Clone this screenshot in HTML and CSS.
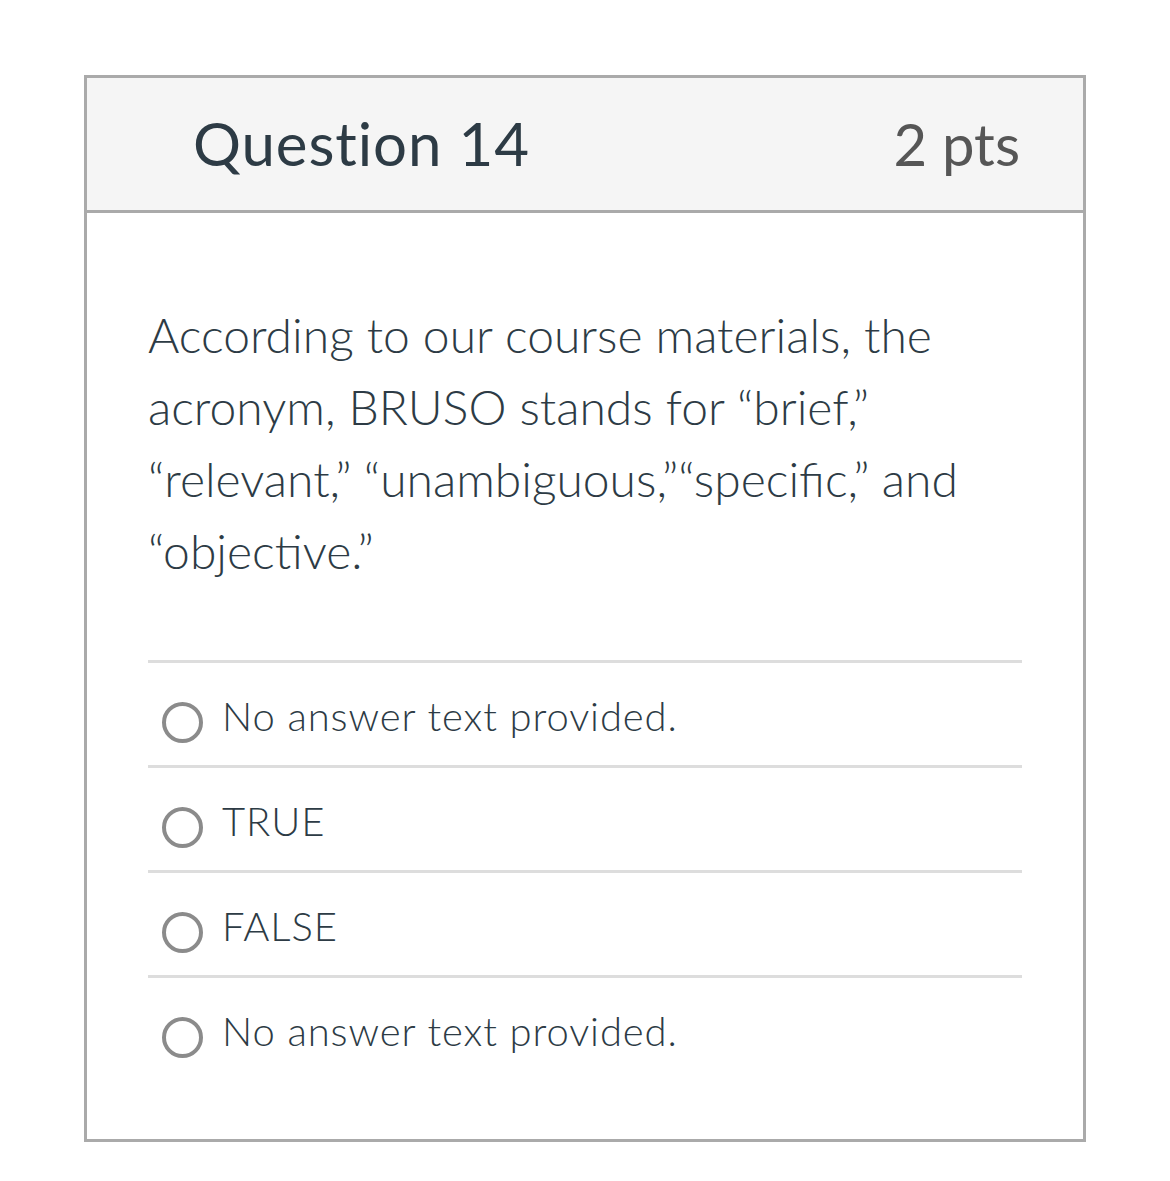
FILE: index.html
```html
<!DOCTYPE html>
<html lang="en">
<head>
<meta charset="utf-8">
<title>Question 14</title>
<link rel="stylesheet" href="styles.css">
</head>
<body>
<div class="card">
  <div class="card-header">
    <span class="title">Question 14</span>
    <span class="points">2 pts</span>
  </div>
  <div class="card-body">
    <p class="question">According to our course materials, the acronym, BRUSO stands for “brief,” “relevant,” “unambiguous,”“specific,” and “objective.”</p>
    <div class="answers">
      <label class="answer"><span class="radio"></span><span class="answer-text">No answer text provided.</span></label>
      <label class="answer"><span class="radio"></span><span class="answer-text">TRUE</span></label>
      <label class="answer"><span class="radio"></span><span class="answer-text">FALSE</span></label>
      <label class="answer"><span class="radio"></span><span class="answer-text">No answer text provided.</span></label>
    </div>
  </div>
</div>
</body>
</html>
```

FILE: styles.css
```css
html, body {
  margin: 0;
  padding: 0;
  background: #ffffff;
}

body {
  font-family: "Lato", "Open Sans", sans-serif;
  color: #2d3b45;
}

.card {
  box-sizing: border-box;
  width: 1002px;
  margin: 75px 0 0 84px;
  border: 3px solid #aaaaaa;
}

.card-header {
  display: flex;
  justify-content: space-between;
  align-items: baseline;
  height: 132px;
  box-sizing: content-box;
  padding: 0 63px 0 106px;
  background: #f5f5f5;
  border-bottom: 3px solid #aaaaaa;
}

.title {
  font-size: 60px;
  font-weight: 400;
  line-height: 72px;
  letter-spacing: 0.9px;
  margin-top: 29px;
  color: #2d3b45;
}

.points {
  font-size: 58px;
  font-weight: 400;
  line-height: 72px;
  color: #565656;
}

.card-body {
  padding: 86px 61px 59px 61px;
}

.question {
  margin: 0 0 73px 0;
  font-family: "Lato Light", "Lato", "Open Sans", sans-serif;
  font-size: 48px;
  font-weight: 300;
  line-height: 72px;
}

.answers {
  display: flex;
  flex-direction: column;
}

.answer {
  display: flex;
  align-items: flex-start;
  border-top: 3px solid #dddddd;
  padding: 25px 0 21px 14px;
}

.radio {
  flex: none;
  box-sizing: border-box;
  width: 41px;
  height: 41px;
  margin-top: 14px;
  margin-right: 19px;
  border: 4px solid #8b8b8b;
  border-radius: 50%;
}

.answer-text {
  font-family: "Lato Light", "Lato", "Open Sans", sans-serif;
  font-size: 40px;
  font-weight: 300;
  line-height: 56px;
  letter-spacing: 0.9px;
}
```
